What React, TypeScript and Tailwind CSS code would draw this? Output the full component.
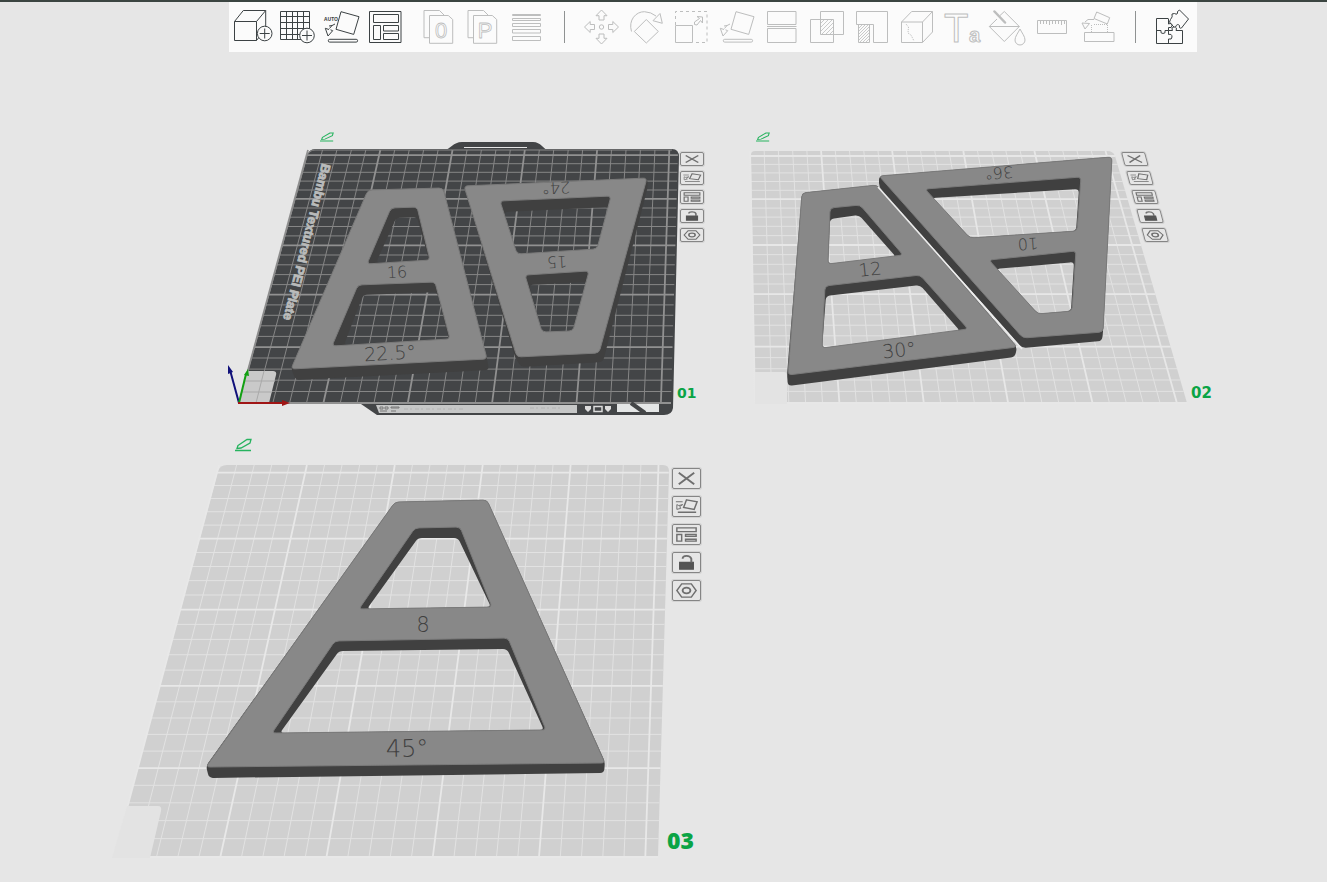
import type { ReactNode } from "react";
import { clsx } from "clsx";

type Point = [number, number];

/* ---------- geometry ---------- */

const BED = 256;

// Projects bed millimetres onto a trapezoid with horizontal top and bottom edges.
function projector(bl: Point, br: Point, tl: Point, tr: Point) {
  const w = (br[0] - bl[0]) / (tr[0] - tl[0]);
  return (x: number, y: number): Point => {
    const u = x / BED;
    const t = y / BED;
    const d = 1 - t + w * t;
    const bottom = bl[0] + (br[0] - bl[0]) * u;
    const top = tl[0] + (tr[0] - tl[0]) * u;
    return [
      (bottom * (1 - t) + top * w * t) / d,
      (bl[1] * (1 - t) + tl[1] * w * t) / d,
    ];
  };
}

function roundPoly(points: Point[], r: number) {
  const n = points.length;
  const toward = (a: Point, b: Point) => {
    const len = Math.hypot(b[0] - a[0], b[1] - a[1]);
    const k = Math.min(r, len / 2) / len;
    return `${(a[0] + (b[0] - a[0]) * k).toFixed(1)} ${(a[1] + (b[1] - a[1]) * k).toFixed(1)}`;
  };
  return (
    points
      .map((p, i) => {
        const prev = points[(i + n - 1) % n];
        const next = points[(i + 1) % n];
        return `${i ? "L" : "M"}${toward(p, prev)}Q${p[0]} ${p[1]} ${toward(p, next)}`;
      })
      .join("") + "Z"
  );
}

type Part = {
  top: Point[];
  body: Point[];
  holes: Point[][];
  through: Point[][];
  labels: { text: string; x: number; y: number; size: number; angle: number }[];
};

function Solid({ part }: { part: Part }) {
  return (
    <g>
      <path
        d={[roundPoly(part.body, 4), ...part.through.map((h) => roundPoly(h, 4))].join("")}
        fill="#404040"
        fillRule="evenodd"
      />
      <path
        d={[roundPoly(part.top, 4), ...part.holes.map((h) => roundPoly(h, 4))].join("")}
        fill="#888888"
        stroke="#7a7a7a"
        strokeWidth="1"
        fillRule="evenodd"
      />
      {part.labels.map((l) => (
        <text
          key={l.text}
          transform={`translate(${l.x} ${l.y}) rotate(${l.angle})`}
          y={l.size * 0.36}
          fontSize={l.size}
          textAnchor="middle"
          fill="#404040"
          className="font-['DejaVu_Sans_Light','DejaVu_Sans',sans-serif] font-extralight"
        >
          {l.text}
        </text>
      ))}
    </g>
  );
}

function Grid({
  project,
  thin,
  bold,
}: {
  project: (x: number, y: number) => Point;
  thin: string;
  bold: string;
}) {
  const steps = Array.from({ length: 26 }, (_, i) => i * 10);
  const line = (a: Point, b: Point) =>
    `M${a[0].toFixed(1)} ${a[1].toFixed(1)}L${b[0].toFixed(1)} ${b[1].toFixed(1)}`;
  const both = (s: number) =>
    line(project(s, 0), project(s, BED)) + line(project(0, s), project(BED, s));
  return (
    <g fill="none">
      <path d={steps.filter((s) => s % 50).map(both).join("")} stroke={thin} />
      <path
        d={steps.filter((s) => s % 50 === 0).map(both).join("")}
        stroke={bold}
        strokeWidth="1.8"
      />
    </g>
  );
}

/* ---------- parts ---------- */

const part16: Part = {
  top: [[368, 190], [443, 188], [487, 359], [291, 369]],
  body: [[368, 190], [443, 188], [487, 359], [489, 370], [296, 380], [291, 369]],
  holes: [
    [[391, 208], [417, 207], [430, 260], [367, 264]],
    [[358, 285], [435, 282], [450, 339], [332, 346]],
  ],
  through: [
    [[396, 218], [417, 217], [429, 260], [376, 263]],
    [[363, 295], [437, 292], [449, 339], [344, 345]],
  ],
  labels: [
    { text: "16", x: 397, y: 272, size: 16, angle: -3 },
    { text: "22.5°", x: 390, y: 353, size: 19, angle: -3 },
  ],
};

const part15: Part = {
  top: [[464, 186], [647, 178], [599, 353], [517, 357]],
  body: [[464, 186], [647, 178], [648, 186], [603, 362], [521, 367], [515, 357]],
  holes: [
    [[500, 201], [611, 196], [597, 249], [517, 254]],
    [[525, 275], [589, 271], [573, 331], [542, 332]],
  ],
  through: [
    [[504, 212], [609, 207], [597, 249], [517, 254]],
    [[529, 285], [587, 282], [573, 331], [542, 332]],
  ],
  labels: [
    { text: "24°", x: 556, y: 188, size: 16, angle: 177 },
    { text: "15", x: 557, y: 262, size: 16, angle: 177 },
  ],
};

const part12: Part = {
  top: [[802, 193], [877, 185], [1017, 347], [788, 375]],
  body: [[802, 193], [877, 185], [1017, 347], [1015, 357], [788, 386], [787, 375]],
  holes: [
    [[830, 208], [860, 205], [903, 255], [828, 264]],
    [[825, 286], [920, 275], [968, 329], [822, 348]],
  ],
  through: [
    [[830, 219], [859, 215], [896, 257], [828, 264]],
    [[826, 296], [920, 285], [960, 331], [822, 348]],
  ],
  labels: [
    { text: "12", x: 870, y: 269, size: 18, angle: -6 },
    { text: "30°", x: 899, y: 350, size: 19, angle: -6 },
  ],
};

const part10: Part = {
  top: [[879, 176], [1112, 157], [1103, 332], [1023, 338]],
  body: [[879, 176], [1112, 157], [1103, 332], [1102, 341], [1022, 348], [879, 187]],
  holes: [
    [[925, 189], [1081, 177], [1077, 231], [970, 238]],
    [[989, 260], [1076, 251], [1072, 311], [1038, 314]],
  ],
  through: [
    [[932, 198], [1079, 189], [1076, 231], [970, 238]],
    [[996, 269], [1074, 262], [1071, 311], [1038, 314]],
  ],
  labels: [
    { text: "36°", x: 999, y: 173, size: 16, angle: 176 },
    { text: "10", x: 1028, y: 244, size: 16, angle: 176 },
  ],
};

const part8: Part = {
  top: [[395, 502], [487, 500], [605, 763], [206, 767]],
  body: [[395, 502], [487, 500], [605, 762], [604, 773], [209, 778], [206, 766]],
  holes: [
    [[415, 528], [460, 527], [492, 607], [359, 609]],
    [[335, 641], [508, 638], [546, 730], [272, 733]],
  ],
  through: [
    [[418, 538], [458, 538], [491, 607], [367, 609]],
    [[339, 651], [507, 649], [544, 730], [280, 733]],
  ],
  labels: [
    { text: "8", x: 423, y: 624, size: 21, angle: -1 },
    { text: "45°", x: 407, y: 748, size: 24, angle: -1 },
  ],
};

const darkBed = projector([239, 403], [671, 403], [308, 150], [678, 150]);
const lightBedRight = projector([755, 403], [1187, 403], [750, 151], [1114, 151]);
const lightBedFront = projector([114, 857], [658, 857], [219, 465], [669, 465]);

function DarkScene() {
  return (
    <>
      <path d="M443 151c8-2 10-9 19-9h71c8 0 10 7 16 9z" fill="#434547" />
      <path d="M464 147.500h63" stroke="#e6e6e6" />
      <path
        d="M315 149H672Q679 149 679 157L673 408Q672 415 664 415H377L361 404H239L307 156Q309 149 315 149Z"
        fill="#434547"
      />
      <Grid project={darkBed} thin="#868686" bold="#919191" />
      <path d="M239 403L307 156Q309 150 315 150H672" fill="none" stroke="#8a8a8a" />
      <text
        transform="translate(322 163) rotate(104)"
        fontSize="13"
        fill="#b9bbbb"
        stroke="#b9bbbb"
        strokeWidth="0.8"
        className="font-['Liberation_Sans',Arial,sans-serif] font-bold"
      >
        Bambu Textured PEI Plate
      </text>
      <path d="M247 371H273Q277 371 276 375L269 403H239Z" fill="#c9c9c9" />
      <path d="M264 371L256 403M245 381H275M242 392H272" stroke="#a9a9a9" />

      <path d="M376 405H577V413H379Z" fill="#c6c7c7" />
      <path
        d="M380 407h3v2h-3zM385 407h3v2h-3zM380 411h7M391 407h8v1h-8zM391 411h5"
        stroke="#777"
        fill="none"
      />
      <path d="M404 409H464M530 408H560" stroke="#b4b4b4" strokeDasharray="4 2 2 3" />
      <path
        d="M585 406h6v3l-3 3-3-3zM605 406h6v3l-3 3-3-3z"
        fill="#dcdcdc"
      />
      <path d="M594 406.500h8v5h-8z" fill="none" stroke="#dcdcdc" strokeWidth="1.500" />
      <path d="M617 404H659V412H617Z" fill="#e4e6e6" />
      <path d="M631 403L645 413" stroke="#434547" strokeWidth="4" />

      <Solid part={part16} />
      <Solid part={part15} />

      <g strokeWidth="2">
        <path d="M239 403L230 370" stroke="#10107a" />
        <path d="M228 365L233 372L228 374Z" fill="#10107a" />
        <path d="M239 403L246 374" stroke="#12a012" />
        <path d="M248 369L249 376L244 375Z" fill="#12a012" />
        <path d="M238 403H283" stroke="#a01515" />
        <path d="M290 403L282 400V406Z" fill="#a01515" />
      </g>
    </>
  );
}

function RightScene() {
  return (
    <>
      <path d="M755 151H1107Q1113 151 1115 156L1187 403H755L751 155Q751 151 755 151Z" fill="#d0d0d0" />
      <Grid project={lightBedRight} thin="#e2e2e2" bold="#e7e7e7" />
      <path d="M755 372H784Q787 372 787 376V404H755Z" fill="#e3e3e3" />
      <Solid part={part12} />
      <Solid part={part10} />
      <path d="M878 187L1022 349" stroke="#ececec" strokeWidth="1.5" />
    </>
  );
}

function FrontScene() {
  return (
    <>
      <path d="M227 465H663Q669 465 669 471L658 857H114L218 471Q220 465 227 465Z" fill="#d0d0d0" />
      <Grid project={lightBedFront} thin="#e2e2e2" bold="#e8e8e8" />
      <path d="M127 806H158Q162 806 161 811L150 858H112Z" fill="#e3e3e3" />
      <Solid part={part8} />
    </>
  );
}

/* ---------- plate controls ---------- */

const controls: { label: string; icon: ReactNode }[] = [
  { label: "Remove plate", icon: <path d="M6 4L22 16M22 4L6 16" strokeWidth="2" /> },
  {
    label: "Auto orient",
    icon: (
      <>
        <path d="M14 3L25 5L22 13L11 11ZM5 16H24" />
        <path d="M3 5H10" strokeWidth="1" />
        <path d="M10 8L7 10L8 12L4 13V8L6 9Z" strokeWidth="1" />
      </>
    ),
  },
  {
    label: "Arrange",
    icon: <path d="M4 3H24V7H4ZM4 10H9V17H4ZM13 10H24V12H13ZM13 15H24V17H13Z" />,
  },
  {
    label: "Lock plate",
    icon: (
      <>
        <path d="M7 10H21V17H7Z" fill="#555" stroke="#555" />
        <path d="M19 10V6Q18 3 14 3Q10 3 10 6" strokeWidth="2" />
      </>
    ),
  },
  {
    label: "Plate settings",
    icon: (
      <>
        <path d="M9 3H19L24 10L19 17H9L4 10Z" />
        <ellipse cx="14" cy="10" rx="4" ry="3" strokeWidth="2" />
      </>
    ),
  },
];

function PlateControls({ className, box }: { className: string; box: string }) {
  return (
    <div className={clsx("absolute flex flex-col", className)}>
      {controls.map((c) => (
        <button
          key={c.label}
          type="button"
          aria-label={c.label}
          className={clsx(
            "rounded-[2px] border border-[#858585] text-[#6f6f6f] ring-1 ring-[#858585]/20",
            box,
          )}
        >
          <svg
            viewBox="0 0 28 20"
            preserveAspectRatio="none"
            className="block h-full w-full"
            fill="none"
            stroke="currentColor"
            strokeWidth="1.5"
            aria-hidden
          >
            {c.icon}
          </svg>
        </button>
      ))}
    </div>
  );
}

function RenameButton({ className }: { className: string }) {
  return (
    <button type="button" aria-label="Rename plate" className={clsx("absolute text-[#27b35f]", className)}>
      <svg
        viewBox="0 0 17 14"
        preserveAspectRatio="none"
        className="block h-full w-full"
        fill="none"
        stroke="currentColor"
        strokeWidth="1.3"
        aria-hidden
      >
        <path d="M3 7.500L12 1.500L16 1.500L15 5L6 10L2 10.500ZM0 12.500H16" />
      </svg>
    </button>
  );
}

function Plate({
  name,
  className,
  viewBox,
  labelClass,
  scene,
  children,
}: {
  name: string;
  className: string;
  viewBox: string;
  labelClass: string;
  scene: ReactNode;
  children: ReactNode;
}) {
  return (
    <section aria-label={`Plate ${name}`} className={clsx("absolute", className)}>
      <svg viewBox={viewBox} className="block h-full w-full" aria-hidden>
        {scene}
      </svg>
      {children}
      <span className={clsx("absolute text-[#0aa445]", labelClass)}>{name}</span>
    </section>
  );
}

/* ---------- toolbar ---------- */

const plus = (x: number, y: number) => (
  <>
    <circle cx={x} cy={y} r="7.300" fill="#fbfbfb" />
    <path d={`M${x - 5} ${y}H${x + 5}M${x} ${y - 5}V${y + 5}`} />
  </>
);

const orient = (
  <>
    <path d="M22 9.700L40 14.700L34.700 32.400L17 27.300Z" />
    <path d="M16 22Q12.500 23 10.500 26.500M13 23.500L10 24M10 27.500L6.300 26.300L9 34L13.700 28.700L11.500 27.800" />
    <rect x="9.300" y="37.300" width="29.300" height="2.800" rx="1.400" />
  </>
);

const pages = (letter: string) => (
  <>
    <path d="M13 35.700H8V8.500H23.500L28 13" />
    <path d="M13.500 13.500H32.300L36.700 17.500V41.300H13.500Z" />
    <text
      x="25"
      y="36"
      fontSize="22"
      textAnchor="middle"
      strokeWidth="0.8"
      className="font-['Liberation_Sans',Arial,sans-serif]"
    >
      {letter}
    </text>
  </>
);

type Tool = { label: string; icon: ReactNode };

const addTools: Tool[] = [
  {
    label: "Add",
    icon: (
      <>
        <path d="M3.500 19.500H25.500V38.500H3.500ZM3.500 19.500L12.300 8.500H34.700L25.500 19.500M34.700 8.500V27L25.500 38.500" />
        {plus(33.7, 31.5)}
      </>
    ),
  },
  {
    label: "Add plate",
    icon: (
      <>
        <path d="M5.500 9.500H34.500V37.500H5.500ZM11.500 9.500V37.500M17.500 9.500V37.500M22.500 9.500V37.500M28.500 9.500V37.500M5.500 14.500H34.500M5.500 20.500H34.500M5.500 26.500H34.500M5.500 32.500H34.500" />
        {plus(32, 33.5)}
      </>
    ),
  },
  {
    label: "Auto orient",
    icon: (
      <>
        {orient}
        <text
          x="12"
          y="18.500"
          fontSize="5"
          textAnchor="middle"
          fill="currentColor"
          stroke="none"
          className="font-['Open_Sans',sans-serif] font-bold"
        >
          AUTO
        </text>
      </>
    ),
  },
  {
    label: "Arrange all",
    icon: (
      <path d="M6.500 9.500H38V40.500H6.500ZM10.500 12.500H35.500V20.500H10.500ZM10.500 23.500H17.500V37.500H10.500ZM20.500 23.500H35.500V29H20.500ZM20.500 31.500H35.500V37.500H20.500Z" />
    ),
  },
];

const splitTools: Tool[] = [
  { label: "Split to objects", icon: pages("0") },
  { label: "Split to parts", icon: pages("P") },
  {
    label: "Variable layer height",
    icon: (
      <path d="M8.500 12.500H36.500V13.500H8.500ZM8.500 16.500H36.500V18.500H8.500ZM8.500 21.500H36.500V24.500H8.500ZM8.500 27.500H36.500V31H8.500ZM8.500 34.500H36.500V38.500H8.500Z" />
    ),
  },
];

const moveArrow = "M22.500 8L28 13.700H25V18H20V13.700H17Z";

const editTools: Tool[] = [
  {
    label: "Move",
    icon: (
      <>
        {[0, 90, 180, 270].map((a) => (
          <path key={a} d={moveArrow} transform={`rotate(${a} 22.5 25)`} />
        ))}
        <circle cx="22.500" cy="25" r="2.200" />
      </>
    ),
  },
  {
    label: "Rotate",
    icon: (
      <path d="M22.300 17.500L34.300 29.500L22.300 41L10.300 29.500ZM7.500 29.500C4 18 12 9.500 20.500 9.700Q27 10 32 14M36 11.500L29 18.700L38.300 21.300Z" />
    ),
  },
  {
    label: "Scale",
    icon: (
      <>
        <path d="M6.500 23V9.500H38V40.500H24" strokeDasharray="3 3" />
        <path d="M6.500 23.500H23.500V40.500H6.500Z" />
        <path d="M25.500 22.500V20L30.500 16.500L28 14.500L33.500 15V21L31.500 18.500L28 23Z" />
      </>
    ),
  },
  { label: "Lay on face", icon: orient },
  {
    label: "Cut",
    icon: <path d="M8.500 9.500H37V22.500H8.500ZM8.500 26.500H37V40.500H8.500ZM8 24.500H37.500" />,
  },
  {
    label: "Mesh boolean",
    icon: (
      <>
        <path d="M16.500 9.500H39.500V32.500H16.500ZM6.500 17.500H29.500V40.500H6.500Z" />
        <path d="M17 21L20 18M17 25L24 18M17 29L28 18M18 32L29 21M22 32L29 25M26 32L29 29" strokeWidth="0.8" />
      </>
    ),
  },
  {
    label: "Support painting",
    icon: (
      <>
        <path d="M7.500 22.500V9.500H38.500V40.500H24.500V22.500ZM9.500 22.500H20.500V40.500H9.500Z" />
        <path
          d="M10 26L13 23M10 29L16 23M10 32L19 23M10 35L20 25M10 38L20 28M11 40L20 31M14 40L20 34M17 40L20 37"
          strokeWidth="0.8"
        />
      </>
    ),
  },
  {
    label: "Seam painting",
    icon: (
      <>
        <path d="M7.500 20H28.500V40.500H7.500ZM7.500 20L17.700 9.500H38.500L28.500 20M38.500 9.500V30L28.500 40.500" />
        <path d="M12 22L14.500 25L14 31L17 33L20 39" strokeDasharray="1 1" />
      </>
    ),
  },
  {
    label: "Text",
    icon: (
      <g className="font-['Liberation_Sans',Arial,sans-serif]">
        <text x="5" y="40" fontSize="40">
          T
        </text>
        <text x="30" y="40" fontSize="20" className="font-bold">
          a
        </text>
      </g>
    ),
  },
  {
    label: "Color painting",
    icon: (
      <>
        <path d="M16 13.500L20.300 9.500L35.300 24.500L20.300 39.500L5.300 24.500L13 17M5.300 24.500H35.300" />
        <path d="M10.500 9.500L21 20.500" strokeWidth="2.500" strokeLinecap="round" />
        <path d="M36 27C38 31 41 34.500 41 38A5 5 0 0 1 31 38C31 34.500 34 31 36 27Z" fill="#fbfbfb" />
      </>
    ),
  },
  {
    label: "Measure",
    icon: (
      <path d="M8.500 18.500H37.500V31.500H8.500ZM11.500 19V22M14.500 19V22M17.500 19V22M20.500 19V23M23.500 19V22M26.500 19V22M29.500 19V22M32.500 19V23M35.500 19V22" />
    ),
  },
  {
    label: "Assembly view",
    icon: (
      <>
        <path d="M10.500 30.500H40V39.500H10.500ZM22.700 10L35.700 15.700L33.300 22L20 16.500ZM8 21L15.500 21.500L11 27ZM11 20L14 17.500H20" />
        <path d="M17.500 30V22.500M33.500 30V22.500M20 22.500H33" strokeDasharray="1 1" />
      </>
    ),
  },
];

const assembly: Tool = {
  label: "Assembly",
  icon: (
    <path d="M18 16.500H6.500V41.500H32.500V28.500H26Q27.500 25 24 25Q21 25 22.500 28.500H18.500V25.500Q22 26.500 22 23.500Q22 20.500 18.500 22V16.500M6.500 28.500H11Q10 31.500 13 31.500Q16 31.500 15 28.500H18.500V32.500Q22 31.500 22 35Q22 38 18.500 37V41.500M24 25L21.500 22.500Q18 20 20.500 17.500Q23 15 22 12L24.500 11.500Q28 13.500 27.500 9.500L29.500 8L38.500 17L31.500 26Q29 27 29.500 23.500Q27 21 25.500 25" />
  ),
};

function ToolButton({
  tool,
  disabled,
  className = "w-11",
}: {
  tool: Tool;
  disabled?: boolean;
  className?: string;
}) {
  return (
    <button
      type="button"
      aria-label={tool.label}
      disabled={disabled}
      className={clsx(
        "h-[50px] shrink-0",
        disabled ? "text-[#808282] opacity-50" : "text-[#3c4244]",
        className,
      )}
    >
      <svg
        width="44"
        height="50"
        viewBox="0 0 44 50"
        fill="none"
        stroke="currentColor"
        strokeLinejoin="round"
        aria-hidden
      >
        {tool.icon}
      </svg>
    </button>
  );
}

function Divider() {
  return <div className="h-8 w-px shrink-0 bg-[#8f9292]" />;
}

function Toolbar() {
  return (
    <header className="flex justify-center border-t-2 border-[#3b4541] pl-[99px]">
      <div
        role="toolbar"
        aria-label="Scene tools"
        className="flex items-center bg-[#fbfbfb] pr-[3px] pl-0.5"
      >
        {addTools.map((t) => (
          <ToolButton key={t.label} tool={t} />
        ))}
        <div className="flex items-center pr-4 pl-[9px]">
          {splitTools.map((t) => (
            <ToolButton key={t.label} tool={t} disabled />
          ))}
        </div>
        <Divider />
        <div className="flex items-center pr-4 pl-3.5">
          {editTools.map((t) => (
            <ToolButton key={t.label} tool={t} disabled className="w-[45px]" />
          ))}
        </div>
        <Divider />
        <div className="flex items-center pl-3.5">
          <ToolButton tool={assembly} />
        </div>
      </div>
    </header>
  );
}

export default function App() {
  return (
    <div className="flex min-h-screen flex-col bg-[#e6e6e6]">
      <Toolbar />
      <main className="relative min-h-[820px] flex-1 overflow-hidden">
        <Plate
          name="01"
          className="top-[78px] left-[220px] h-[290px] w-[490px]"
          viewBox="220 130 490 290"
          labelClass="top-[254px] left-[457px] font-['DejaVu_Sans',sans-serif] text-[14px] leading-[18px] font-bold"
          scene={<DarkScene />}
        >
          <RenameButton className="top-0.5 left-[100px] h-[10px] w-[14px]" />
          <PlateControls className="top-[22px] left-[460px] gap-[5px]" box="h-[14px] w-6" />
        </Plate>
        <Plate
          name="02"
          className="top-[78px] left-[740px] h-[290px] w-[490px]"
          viewBox="740 130 490 290"
          labelClass="top-[254px] left-[451px] font-['DejaVu_Sans',sans-serif] text-[15px] leading-[18px] font-bold"
          scene={<RightScene />}
        >
          <RenameButton className="top-0.5 left-4 h-[10px] w-[14px]" />
          <PlateControls className="top-[22px] left-[393px] skew-x-[15deg] gap-[5px]" box="h-[14px] w-6" />
        </Plate>
        <Plate
          name="03"
          className="top-[378px] left-[100px] h-[440px] w-[620px]"
          viewBox="100 430 620 440"
          labelClass="top-[398px] left-[567px] font-['Open_Sans',sans-serif] text-[23px] leading-6 font-extrabold"
          scene={<FrontScene />}
        >
          <RenameButton className="top-2 left-[135px] h-[14px] w-[17px]" />
          <PlateControls className="top-[38px] left-[572px] gap-[7px]" box="h-[21px] w-[29px]" />
        </Plate>
      </main>
    </div>
  );
}
